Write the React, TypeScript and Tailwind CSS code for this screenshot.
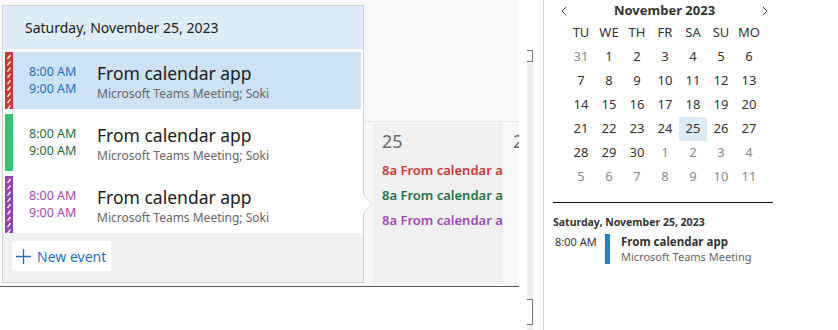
import { ChevronLeft, ChevronRight } from "lucide-react";

const font = { fontFamily: '"Noto Sans", "Open Sans", sans-serif' };

type Ev = { bar: string; hatched: boolean; time: string; bg: string };

const events: Ev[] = [
  { bar: "#d13438", hatched: true, time: "text-[#1f6cbf]", bg: "bg-[#cce2f6]" },
  { bar: "#33c46d", hatched: false, time: "text-[#1d6b3f]", bg: "bg-white" },
  { bar: "#9044ae", hatched: true, time: "text-[#9a4bb8]", bg: "bg-white" },
];

const Bar = ({ color, hatched }: { color: string; hatched: boolean }) => (
  <svg width="8" height="57" className="shrink-0 block">
    <rect width="8" height="57" fill={color} />
    {hatched &&
      Array.from({ length: 9 }).map((_, i) => (
        <line
          key={i}
          x1="2.5"
          y1={7 + i * 6.3}
          x2="5.5"
          y2={3 + i * 6.3}
          stroke="white"
          strokeWidth="1.4"
        />
      ))}
  </svg>
);

const EventRow = ({ ev }: { ev: Ev }) => (
  <div className={`flex h-[57px] ${ev.bg}`}>
    <Bar color={ev.bar} hatched={ev.hatched} />
    <div
      className={`w-[84px] shrink-0 pl-[16px] pt-[11px] text-[12.5px] leading-[17px] whitespace-nowrap ${ev.time}`}
    >
      <div>8:00 AM</div>
      <div>9:00 AM</div>
    </div>
    <div className="pt-[10px] whitespace-nowrap">
      <div className="text-[17.5px] leading-[22px] text-[#1b1b1b]">From calendar app</div>
      <div className="mt-[2px] text-[12px] leading-[16px] text-[#666]">Microsoft Teams Meeting; Soki</div>
    </div>
  </div>
);

const weeks = [
  [31, 1, 2, 3, 4, 5, 6],
  [7, 8, 9, 10, 11, 12, 13],
  [14, 15, 16, 17, 18, 19, 20],
  [21, 22, 23, 24, 25, 26, 27],
  [28, 29, 30, 1, 2, 3, 4],
  [5, 6, 7, 8, 9, 10, 11],
];

const isOut = (r: number, d: number) => (r === 0 && d > 20) || (r >= 4 && d < 20);

export default function App() {
  return (
    <div className="flex w-[838px] h-[330px] bg-white overflow-hidden" style={font}>
      {/* Left calendar area */}
      <div className="relative w-[519px] shrink-0 flex flex-col">
        <div className="h-[122px] bg-[#f8f8f8] border-b border-[#e6e6e6]" />
        <div className="h-[165px] bg-[#f8f8f8] flex pt-[1px] pb-[2px] border-b border-[#555]">
          <div className="w-[373px]" />
          <div className="w-[130px] bg-[#f0f0f0] pl-[9px] pt-[6px]">
            <div className="text-[18px] leading-[24px] text-[#6b6b6b]">25</div>
            <div className="mt-[8px] flex flex-col gap-[7px] text-[13px] font-semibold leading-[18px] whitespace-nowrap overflow-hidden">
              <div className="text-[#d13438]">8a From calendar a</div>
              <div className="text-[#1e7245]">8a From calendar a</div>
              <div className="text-[#9a4bb8]">8a From calendar a</div>
            </div>
          </div>
          <div className="flex-1 pl-[10px] pt-[6px] text-[18px] leading-[24px] text-[#6b6b6b] overflow-hidden">2</div>
        </div>
        <div className="flex-1 bg-white" />

        {/* Popup */}
        <div className="absolute left-[2px] top-[5px] w-[362px] h-[278px] border border-[#cfcfcf] bg-white flex flex-col">
          <div className="h-[43px] bg-[#deecf9] pl-[22px] flex items-center text-[14px] text-[#1b1b1b]">
            Saturday, November 25, 2023
          </div>
          <div className="flex flex-col gap-[5px] px-[2px] pt-[3px]">
            {events.map((ev, i) => (
              <EventRow key={i} ev={ev} />
            ))}
          </div>
          <div className="flex-1 bg-[#f0f0f0] pl-[9px] pt-[8px]">
            <div className="w-[99px] h-[30px] bg-white flex items-center gap-[5px] pl-[3px] text-[14px] text-[#1a6fc4] whitespace-nowrap">
              <svg width="17" height="17" viewBox="0 0 17 17" className="shrink-0">
                <path d="M8.5 1v15M1 8.5h15" stroke="#1a6fc4" strokeWidth="1.3" />
              </svg>
              New event
            </div>
          </div>
          <svg width="11" height="20" className="absolute left-[360px] top-[188px]">
            <path d="M0 0 L9 10 L0 20 Z" fill="white" />
            <path d="M0 0 L9 10 L0 20" fill="none" stroke="#dadada" strokeWidth="1" />
          </svg>
        </div>
      </div>

      {/* Scrollbar strip */}
      <div className="w-[24px] shrink-0 flex flex-col pl-[8px] pr-[10px]">
        <div className="mt-[50px] h-[12px] border-y border-r border-[#777]" />
        <div className="flex-1 bg-[#f0f0f0] flex flex-col justify-end">
          <div className="mb-[5px] h-[26px] border-y border-r border-[#777] bg-white" />
        </div>
      </div>

      {/* Right panel */}
      <div className="flex-1 border-l border-[#d4d4d4] pl-[9px] text-[#333]">
        <div className="w-[224px] h-[21px] flex items-center justify-between">
          <ChevronLeft size={16} strokeWidth={1.5} className="text-[#444] ml-[3px]" />
          <div className="text-[13px] font-bold text-[#333]">November 2023</div>
          <ChevronRight size={16} strokeWidth={1.5} className="text-[#444] mr-[4px]" />
        </div>
        <div className="ml-[14px] grid grid-cols-[repeat(7,28px)] text-[13px]">
          {["TU", "WE", "TH", "FR", "SA", "SU", "MO"].map((d) => (
            <div key={d} className="h-[24px] flex items-center justify-center text-[#333]">
              {d}
            </div>
          ))}
          {weeks.map((w, r) =>
            w.map((d, c) => (
              <div
                key={`${r}-${c}`}
                className={`h-[24px] flex items-center justify-center ${
                  isOut(r, d) ? "text-[#8a8a8a]" : "text-[#333]"
                } ${r === 3 && d === 25 ? "bg-[#dcebf8]" : ""}`}
              >
                {d}
              </div>
            ))
          )}
        </div>
        <div className="mt-[13px] w-[220px] border-t border-[#111]" />
        <div className="mt-[11px] text-[10.5px] font-bold leading-[16px] text-[#333] whitespace-nowrap">
          Saturday, November 25, 2023
        </div>
        <div className="mt-[4px] flex">
          <div className="w-[52px] pl-[2px] text-[11px] leading-[16px] text-[#333] whitespace-nowrap">8:00 AM</div>
          <div className="w-[5px] h-[30px] bg-[#1a86d9]" />
          <div className="pl-[11px] leading-[15px] whitespace-nowrap">
            <div className="text-[11.5px] font-bold text-[#333]">From calendar app</div>
            <div className="text-[11px] text-[#666]">Microsoft Teams Meeting</div>
          </div>
        </div>
      </div>
    </div>
  );
}
